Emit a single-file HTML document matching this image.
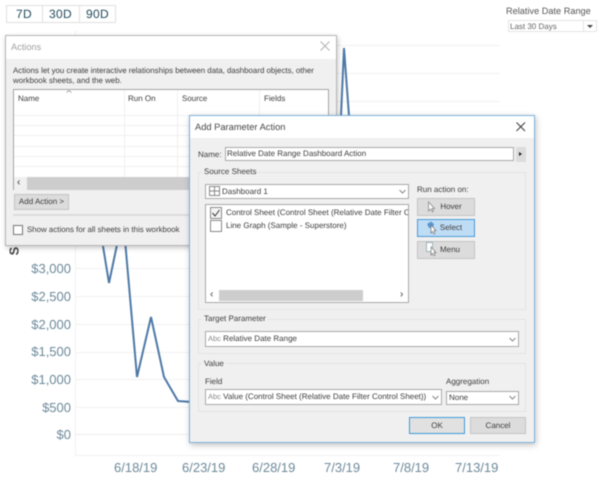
<!DOCTYPE html>
<html><head><meta charset="utf-8">
<style>
html,body{margin:0;padding:0;background:#fff}
body{width:600px;height:483px;position:relative;overflow:hidden;font-family:"Liberation Sans",sans-serif;font-size:8px;color:#3c3c3c;filter:blur(.4px);text-rendering:geometricPrecision}
.a{position:absolute;white-space:nowrap}
.b{position:absolute;box-sizing:border-box}
.ax{position:absolute;color:#6e8a9b;font-size:13px;white-space:nowrap}
.r{text-align:right;width:50px;left:21px}
.combo{position:absolute;box-sizing:border-box;background:#fff;border:1px solid #a9a9a9;white-space:nowrap;overflow:hidden}
.btn{position:absolute;box-sizing:border-box;background:#dcdcdc;border:1px solid #c4c4c4;text-align:center;white-space:nowrap}
.grp{position:absolute;box-sizing:border-box;border:1px solid #e3e3e3}
.lbl{position:absolute;white-space:nowrap;background:#f0f0f0;padding:0 2px;line-height:10px}
</style></head><body>
<svg class="a" style="left:0;top:0" width="600" height="483">
<g stroke="#f2f2f2" fill="none">
<path d="M75 45.500H500M75 73.500H500M75 101.500H500M75 268.500H190M75 296.500H190M75 324.500H190M75 352.500H190M75 379.500H190M75 407.500H190M75 455.500H500M75.500 30V455"/>
</g>
<path d="M75 434.500H190" stroke="#ddd" stroke-dasharray="1 1" fill="none"/>
<path d="M102 240L109 283L118 240M125 240L137 377L151 317L164 377L178 401L192 402M341 116L344 48L349 116" fill="none" stroke="#4e79a7" stroke-width="2"/>
</svg>
<!-- top buttons -->
<div class="b" style="left:6px;top:5px;width:110px;height:18px;border:1px solid #e0e0e0"></div>
<div class="b" style="left:42px;top:5px;width:1px;height:18px;background:#e0e0e0"></div>
<div class="b" style="left:79px;top:5px;width:1px;height:18px;background:#e0e0e0"></div>
<div class="a" style="left:6px;top:7px;width:36px;text-align:center;font-size:12px;line-height:15px;color:#23495c;letter-spacing:.3px">7D</div>
<div class="a" style="left:42px;top:7px;width:37px;text-align:center;font-size:12px;line-height:15px;color:#23495c;letter-spacing:.3px">30D</div>
<div class="a" style="left:79px;top:7px;width:37px;text-align:center;font-size:12px;line-height:15px;color:#23495c;letter-spacing:.3px">90D</div>
<!-- parameter -->
<div class="a" style="left:506px;top:5px;font-size:9.200px;line-height:12px;color:#555">Relative Date Range</div>
<div class="b" style="left:508px;top:20px;width:89px;height:12px;border:1px solid #e4e4e4"></div>
<div class="b" style="left:583px;top:20px;width:1px;height:12px;background:#e4e4e4"></div>
<div class="a" style="left:510px;top:21px;font-size:8px;line-height:11px;color:#666">Last 30 Days</div>
<div class="b" style="left:587px;top:25px;border:3px solid transparent;border-top-color:#444;border-bottom:0"></div>
<!-- axis labels -->
<div class="a" style="left:10px;top:244px;font-size:13px;line-height:14px;font-weight:bold;color:#444;transform:rotate(-90deg)">S</div>
<div class="ax r" style="top:261px">$3,000</div>
<div class="ax r" style="top:289px">$2,500</div>
<div class="ax r" style="top:317px">$2,000</div>
<div class="ax r" style="top:344px">$1,500</div>
<div class="ax r" style="top:372px">$1,000</div>
<div class="ax r" style="top:400px">$500</div>
<div class="ax r" style="top:427px">$0</div>
<div class="ax" style="left:114px;top:460px">6/18/19</div>
<div class="ax" style="left:182px;top:460px">6/23/19</div>
<div class="ax" style="left:252px;top:460px">6/28/19</div>
<div class="ax" style="left:324px;top:460px">7/3/19</div>
<div class="ax" style="left:393px;top:460px">7/8/19</div>
<div class="ax" style="left:455px;top:460px">7/13/19</div>
<!-- Actions dialog -->
<div class="b" style="left:5px;top:35px;width:332px;height:211px;background:#f0f0f0;border:1px solid #b5b5b5;box-shadow:1px 2px 5px rgba(0,0,0,.22)">
<div class="b" style="left:0;top:0;width:330px;height:23px;background:#fff"></div>
</div>
<div class="a" style="left:11px;top:41px;font-size:9.200px;line-height:12px;color:#a0a0a0">Actions</div>
<svg class="a" style="left:319px;top:40px" width="12" height="12"><path d="M1.500 1.500L10.500 10.500M10.500 1.500L1.500 10.500" stroke="#b5b5b5" stroke-width="1.100"/></svg>
<div class="a" style="left:13px;top:66px;font-size:7.900px;line-height:10px">Actions let you create interactive relationships between data, dashboard objects, other<br>workbook sheets, and the web.</div>
<div class="b" style="left:13px;top:89px;width:316px;height:101px;background:#fff;border:1px solid #a5a5a5"></div>
<svg class="a" style="left:14px;top:90px" width="314" height="88">
<path d="M0 25.500H314M0 35.500H314M0 45.500H314M0 56.500H314M0 66.500H314M0 76.500H314M110.500 0V88M163.500 0V88M245.500 0V88" stroke="#f0f0f0" fill="none"/>
<path d="M52.500 2.500L55 .5L57.500 2.500" stroke="#aaa" fill="none"/>
</svg>
<div class="a" style="left:18px;top:93px;line-height:11px">Name</div>
<div class="a" style="left:128px;top:93px;line-height:11px">Run On</div>
<div class="a" style="left:182px;top:93px;line-height:11px">Source</div>
<div class="a" style="left:264px;top:93px;line-height:11px">Fields</div>
<div class="b" style="left:14px;top:177px;width:314px;height:13px;background:#f0f0f0"></div>
<div class="b" style="left:27px;top:177px;width:170px;height:13px;background:#cdcdcd"></div>
<div class="a" style="left:17px;top:176px;font-size:10px;line-height:13px;color:#333">&#8249;</div>
<div class="btn" style="left:14px;top:194px;width:55px;height:16px;line-height:14px">Add Action &gt;</div>
<div class="b" style="left:13px;top:214px;width:180px;height:2px;background:#dcdcdc"></div>
<div class="b" style="left:13px;top:225px;width:10px;height:10px;background:#fff;border:1px solid #777"></div>
<div class="a" style="left:27px;top:224px;font-size:7.900px;line-height:11px">Show actions for all sheets in this workbook</div>
<!-- Param dialog -->
<div class="b" style="left:189px;top:115px;width:346px;height:328px;background:#f0f0f0;border:1px solid #7cb0dc;box-shadow:1px 2px 6px rgba(0,0,0,.25)">
<div class="b" style="left:0;top:0;width:344px;height:22px;background:#fff"></div>
</div>
<div class="a" style="left:195px;top:121px;font-size:9.300px;line-height:12px;color:#444">Add Parameter Action</div>
<svg class="a" style="left:515px;top:121px" width="12" height="12"><path d="M1.500 1.500L10 10M10 1.500L1.500 10" stroke="#444" stroke-width="1.100"/></svg>
<div class="a" style="left:198px;top:149px;line-height:11px">Name:</div>
<div class="combo" style="left:225px;top:147px;width:289px;height:14px;line-height:12px;padding-left:1px">Relative Date Range Dashboard Action</div>
<div class="b" style="left:516px;top:147px;width:10px;height:15px;background:#dcdcdc"></div>
<div class="b" style="left:519px;top:152px;border:2.500px solid transparent;border-left:3px solid #222;border-right:0"></div>
<div class="grp" style="left:198px;top:172px;width:328px;height:138px"></div>
<div class="lbl" style="left:202px;top:167px">Source Sheets</div>
<div class="combo" style="left:205px;top:184px;width:204px;height:15px;line-height:13px;padding-left:16px">Dashboard 1</div>
<svg class="a" style="left:209px;top:186px" width="12" height="11"><path d="M.500.500H10.500V9.500H.500ZM5.500.500V9.500M.500 5H10.500" stroke="#888" fill="none"/></svg>
<svg class="a" style="left:399px;top:189px" width="8" height="6"><path d="M.500 1L3.500 4L6.500 1" stroke="#888" fill="none"/></svg>
<div class="b" style="left:205px;top:204px;width:204px;height:99px;background:#fff;border:1px solid #a9a9a9"></div>
<div class="b" style="left:210px;top:207px;width:12px;height:12px;background:#f4f4f4;border:1px solid #888"></div>
<svg class="a" style="left:210px;top:207px" width="12" height="12"><path d="M2.500 6L5 9L9.500 3" stroke="#333" fill="none"/></svg>
<div class="b" style="left:210px;top:220px;width:12px;height:12px;background:#fff;border:1px solid #888"></div>
<div class="a" style="left:226px;top:207px;width:182px;overflow:hidden;line-height:11px">Control Sheet (Control Sheet (Relative Date Filter Control Sheet))</div>
<div class="a" style="left:226px;top:220px;line-height:11px">Line Graph (Sample - Superstore)</div>
<div class="b" style="left:219px;top:290px;width:144px;height:11px;background:#cdcdcd"></div>
<div class="a" style="left:210px;top:289px;font-size:10px;line-height:12px">&#8249;</div>
<div class="a" style="left:400px;top:289px;font-size:10px;line-height:12px">&#8250;</div>
<div class="a" style="left:417px;top:184px;line-height:11px">Run action on:</div>
<div class="btn" style="left:417px;top:198px;width:58px;height:18px;line-height:16px;padding-left:10px;border-width:1.500px">Hover</div>
<div class="btn" style="left:417px;top:219px;width:58px;height:18px;line-height:16px;padding-left:10px;background:#bfdcf5;border:1px solid #4a9ad6">Select</div>
<div class="btn" style="left:417px;top:241px;width:58px;height:18px;line-height:16px;padding-left:8px;border-width:1.500px">Menu</div>
<svg class="a" style="left:425px;top:200px" width="14" height="56">
<path d="M3.500 2V11L5.500 9L7.500 12L8.500 11L7 8.500H9.500Z" fill="#fff" stroke="#888" stroke-width=".8"/>
<path d="M2 24L6 21.500L9 24L8 28H4Z" fill="#5a97d0"/>
<path d="M6 25V33L7.500 31.500L9 34L10 33L9 30.500H11Z" fill="#fff" stroke="#777" stroke-width=".7"/>
<rect x="1.500" y="42.500" width="6" height="9" fill="#fff" stroke="#8aa" stroke-width=".8"/>
<path d="M6 47V55L7.500 53.500L9 56L10 55L9 52.500H11Z" fill="#fff" stroke="#777" stroke-width=".7"/>
</svg>
<div class="grp" style="left:198px;top:319px;width:328px;height:35px"></div>
<div class="lbl" style="left:202px;top:314px">Target Parameter</div>
<div class="combo" style="left:205px;top:331px;width:314px;height:16px;line-height:14px;padding-left:2px"><span style="color:#888;font-size:7.500px">Abc</span> Relative Date Range</div>
<svg class="a" style="left:509px;top:337px" width="8" height="6"><path d="M.500 1L3.500 4L6.500 1" stroke="#888" fill="none"/></svg>
<div class="grp" style="left:198px;top:363px;width:328px;height:49px"></div>
<div class="lbl" style="left:202px;top:359px">Value</div>
<div class="a" style="left:205px;top:376px;line-height:11px">Field</div>
<div class="a" style="left:446px;top:376px;line-height:11px">Aggregation</div>
<div class="combo" style="left:205px;top:389px;width:237px;height:16px;line-height:14px;padding-left:2px"><span style="color:#888;font-size:7.500px">Abc</span> Value (Control Sheet (Relative Date Filter Control Sheet))</div>
<svg class="a" style="left:432px;top:395px" width="8" height="6"><path d="M.500 1L3.500 4L6.500 1" stroke="#888" fill="none"/></svg>
<div class="combo" style="left:446px;top:391px;width:73px;height:14px;line-height:12px;padding-left:2px">None</div>
<svg class="a" style="left:509px;top:395px" width="8" height="6"><path d="M.500 1L3.500 4L6.500 1" stroke="#888" fill="none"/></svg>
<div class="btn" style="left:409px;top:417px;width:56px;height:17px;line-height:15px;border:1px solid #3f9ad8;background:#e1e1e1">OK</div>
<div class="btn" style="left:470px;top:417px;width:56px;height:17px;line-height:15px">Cancel</div>
</body></html>
